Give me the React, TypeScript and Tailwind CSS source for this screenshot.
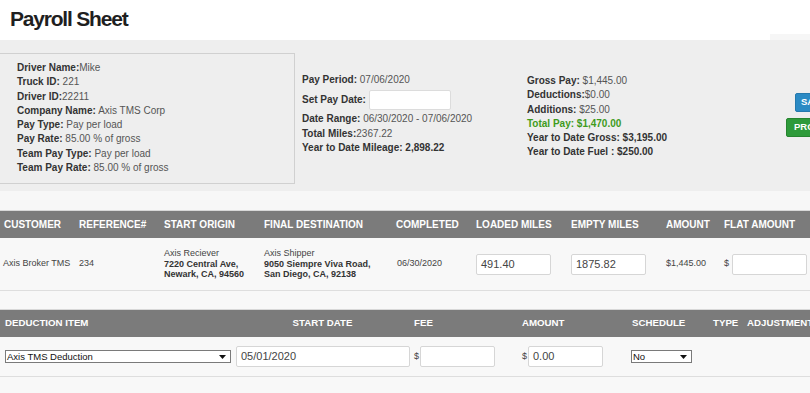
import React from "react";

const Line = ({ label, value, vb = false, cls = "" }: { label: string; value?: string; vb?: boolean; cls?: string }) => (
  <div className={"whitespace-nowrap " + cls}>
    <span className="font-bold">{label}</span>
    {value !== undefined && <span className={vb ? "font-bold" : "text-[#555]"}>{value}</span>}
  </div>
);

const Input = ({ w, value = "" }: { w: string; value?: string }) => (
  <div className={"shrink-0 h-[21px] bg-white border border-[#d6d6d6] rounded-[2px] flex items-center pl-[4px] text-[11px] text-[#444] " + w}>
    {value}
  </div>
);

const Select = ({ w, value }: { w: string; value: string }) => (
  <div className={"shrink-0 h-[13px] bg-white border border-[#7a7a7a] flex items-center justify-between pl-[1px] pr-[4px] text-[9.5px] text-[#111] leading-none " + w}>
    <span>{value}</span>
    <svg width="7" height="4" viewBox="0 0 7 4">
      <path d="M0 0 L7 0 L3.5 4 Z" fill="#111" />
    </svg>
  </div>
);

export default function App() {
  return (
    <div className="w-[810px] h-[393px] overflow-hidden bg-[#f8f8f8] font-['Liberation_Sans',Arial,sans-serif] text-[#333]">
      <div className="h-[40px] bg-white flex">
        <div className="w-[770px] pl-[10px] pt-[7px]">
          <h1 className="text-[21px] font-bold tracking-[-1.2px] text-[#1f1f1f] leading-[24px]">Payroll Sheet</h1>
        </div>
        <div className="flex-1 flex flex-col">
          <div className="h-[34px]" />
          <div className="flex-1 bg-[#f6f6f6]" />
        </div>
      </div>

      <div className="h-[151px] bg-[#eeeeee] flex *:shrink-0 text-[10px] leading-[14.3px]">
        <div className="mt-[13px] w-[295px] h-[131px] border border-l-0 border-[#d0d0d0] pl-[17px] pt-[7px]">
          <Line label="Driver Name:" value="Mike" />
          <Line label="Truck ID:" value=" 221" />
          <Line label="Driver ID:" value="22211" />
          <Line label="Company Name:" value=" Axis TMS Corp" />
          <Line label="Pay Type:" value=" Pay per load" />
          <Line label="Pay Rate:" value=" 85.00 % of gross" />
          <Line label="Team Pay Type:" value=" Pay per load" />
          <Line label="Team Pay Rate:" value=" 85.00 % of gross" />
        </div>

        <div className="ml-[7px] w-[225px] pt-[33px]">
          <Line label="Pay Period:" value=" 07/06/2020" />
          <div className="flex items-center mt-[3px] h-[20px]">
            <span className="font-bold">Set Pay Date:</span>
            <div className="shrink-0 ml-[3px] w-[82px] h-[20px] bg-white border border-[#dcdcdc] rounded-[2px]" />
          </div>
          <div className="mt-[2px]">
            <Line label="Date Range:" value=" 06/30/2020 - 07/06/2020" />
            <Line label="Total Miles:" value="2367.22" />
            <Line label="Year to Date Mileage:" value=" 2,898.22" vb />
          </div>
        </div>

        <div className="w-[259px] pt-[34px]">
          <Line label="Gross Pay:" value=" $1,445.00" />
          <Line label="Deductions:" value="$0.00" />
          <Line label="Additions:" value=" $25.00" />
          <Line label="Total Pay: $1,470.00" cls="text-[#3f9b1c]" />
          <Line label="Year to Date Gross: $3,195.00" />
          <Line label="Year to Date Fuel : $250.00" />
        </div>

        <div className="pt-[53px] flex flex-col items-start gap-[6px]">
          <div className="ml-[9px] h-[19px] bg-[#2b8ac4] border border-[#2579ad] rounded-[2px] text-white font-bold text-[9.5px] flex items-center pl-[5px] pr-[8px]">
            SAVE
          </div>
          <div className="h-[19px] bg-[#2e9a3a] border border-[#26842f] rounded-[2px] text-white font-bold text-[9.5px] flex items-center pl-[7px] pr-[8px]">
            PROCESS
          </div>
        </div>
      </div>

      <div className="h-[19px] bg-[#f7f7f7]" />

      <div className="h-[28px] bg-[#7b7b7b] border-t border-[#d8d8d8] flex *:shrink-0 items-center text-white font-bold text-[10px] whitespace-nowrap">
        <div className="w-[79px] pl-[4px]">CUSTOMER</div>
        <div className="w-[85px]">REFERENCE#</div>
        <div className="w-[100px]">START ORIGIN</div>
        <div className="w-[132px]">FINAL DESTINATION</div>
        <div className="w-[80px]">COMPLETED</div>
        <div className="w-[95px]">LOADED MILES</div>
        <div className="w-[95px]">EMPTY MILES</div>
        <div className="w-[58px]">AMOUNT</div>
        <div className="w-[100px]">FLAT AMOUNT</div>
      </div>

      <div className="h-[53px] border-b border-[#dedede] flex *:shrink-0 items-center text-[9px] text-[#444] whitespace-nowrap">
        <div className="w-[79px] pl-[3px]">Axis Broker TMS</div>
        <div className="w-[85px]">234</div>
        <div className="w-[100px] leading-[10.5px]">
          <div>Axis Reciever</div>
          <div className="font-bold text-[#333]">7220 Central Ave,</div>
          <div className="font-bold text-[#333]">Newark, CA, 94560</div>
        </div>
        <div className="w-[132px] leading-[10.5px]">
          <div>Axis Shipper</div>
          <div className="font-bold text-[#333]">9050 Siempre Viva Road,</div>
          <div className="font-bold text-[#333]">San Diego, CA, 92138</div>
        </div>
        <div className="w-[80px] pl-[1px]">06/30/2020</div>
        <div className="w-[95px]"><Input w="w-[75px]" value="491.40" /></div>
        <div className="w-[95px]"><Input w="w-[75px]" value="1875.82" /></div>
        <div className="w-[58px]">$1,445.00</div>
        <div className="w-[100px] flex items-center">
          <span className="w-[8px]">$</span>
          <Input w="w-[75px]" />
        </div>
      </div>

      <div className="h-[18px]" />

      <div className="h-[28px] bg-[#7b7b7b] border-t border-[#d8d8d8] flex *:shrink-0 items-center text-white font-bold text-[9.7px] whitespace-nowrap">
        <div className="w-[236px] pl-[5px]">DEDUCTION ITEM</div>
        <div className="w-[178px] text-center pr-[5px]">START DATE</div>
        <div className="w-[108px]">FEE</div>
        <div className="w-[110px]">AMOUNT</div>
        <div className="w-[81px]">SCHEDULE</div>
        <div className="w-[34px]">TYPE</div>
        <div className="w-[100px]">ADJUSTMENT</div>
      </div>

      <div className="h-[40px] border-b border-[#dedede] flex *:shrink-0 items-center text-[9px] text-[#444] whitespace-nowrap">
        <div className="w-[236px] pl-[5px]"><Select w="w-[226px]" value="Axis TMS Deduction" /></div>
        <div className="w-[178px]"><Input w="w-[174px]" value="05/01/2020" /></div>
        <div className="w-[108px] flex items-center">
          <span className="w-[6px]">$</span>
          <Input w="w-[75px]" />
        </div>
        <div className="w-[109px] flex items-center">
          <span className="w-[6px]">$</span>
          <Input w="w-[75px]" value="0.00" />
        </div>
        <div className="w-[100px]"><Select w="w-[61px]" value="No" /></div>
      </div>
    </div>
  );
}
